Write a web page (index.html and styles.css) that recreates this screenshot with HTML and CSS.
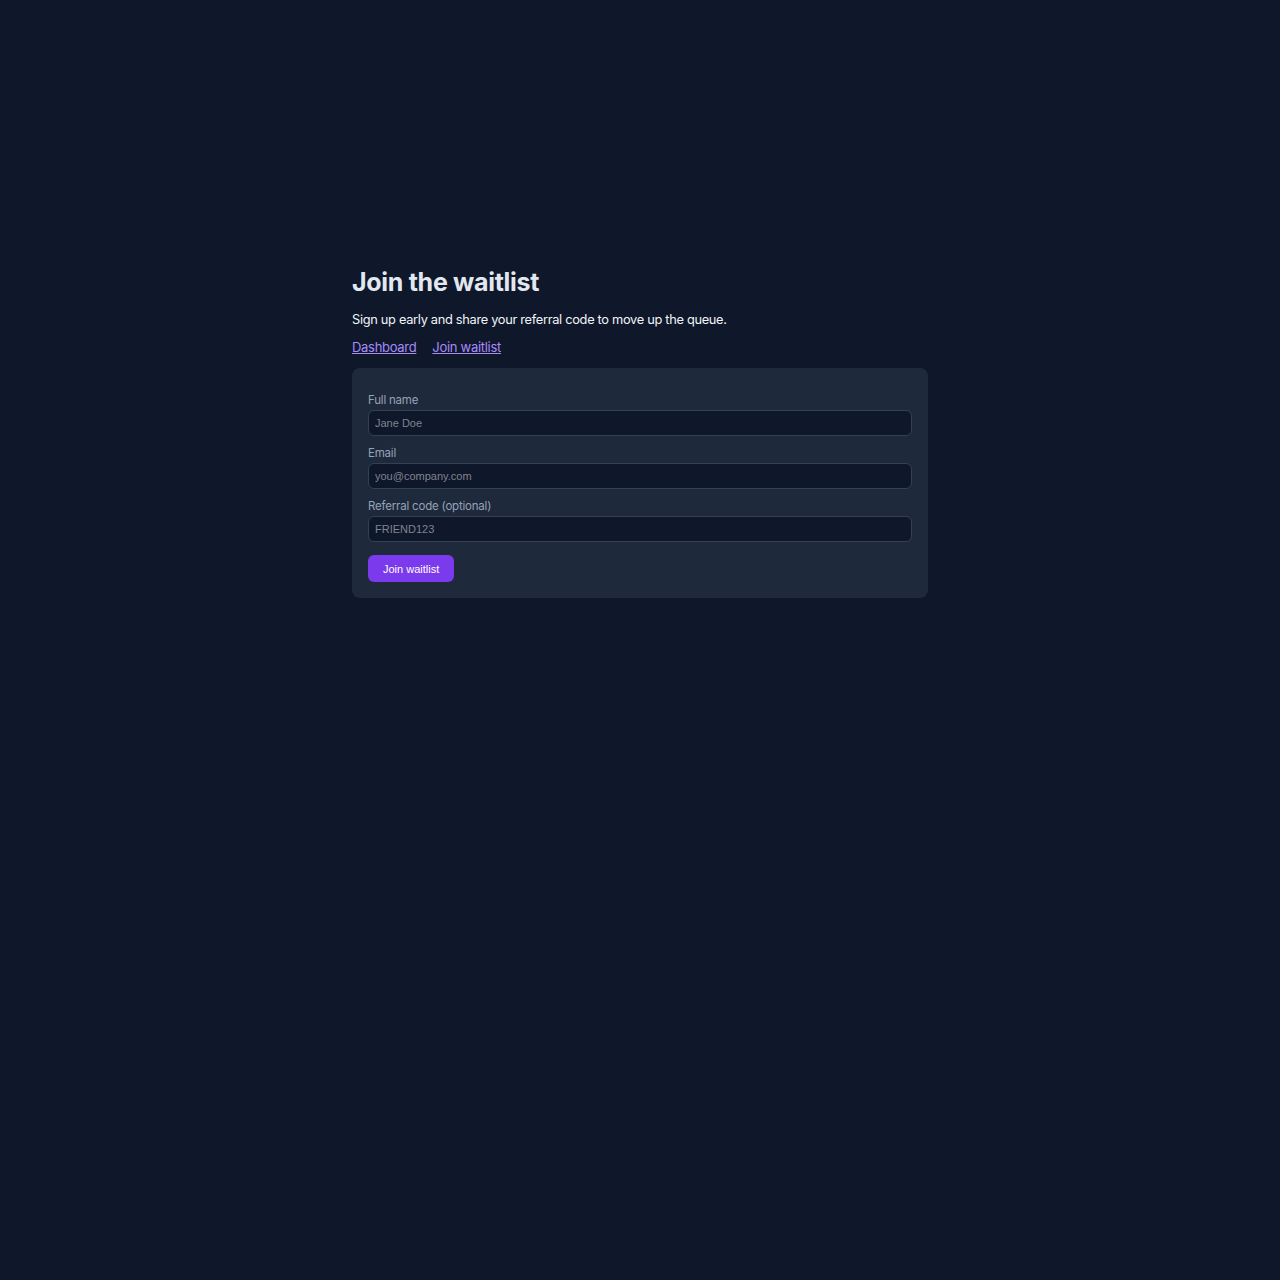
FILE: index.html
```html
<!DOCTYPE html>
<html lang="en">

<head>
    <meta charset="UTF-8">
    <meta name="viewport" content="width=device-width, initial-scale=1.0">
    <title>Join the waitlist</title>
    <link rel="stylesheet" href="styles.css">
</head>

<body>
    <main class="page">
        <h1 class="title">Join the waitlist</h1>
        <p class="lead">Sign up early and share your referral code to move up the queue.</p>
        <nav class="links">
            <a href="#">Dashboard</a>
            <a href="#">Join waitlist</a>
        </nav>

        <form class="card">
            <label class="field">
                <span class="label">Full name</span>
                <input type="text" placeholder="Jane Doe">
            </label>
            <label class="field">
                <span class="label">Email</span>
                <input type="email" placeholder="you@company.com">
            </label>
            <label class="field">
                <span class="label">Referral code (optional)</span>
                <input type="text" placeholder="FRIEND123">
            </label>
            <button type="button" class="btn">Join waitlist</button>
        </form>
    </main>
</body>

</html>
```

FILE: styles.css
```css
body {
    margin: 0;
    min-height: 100vh;
    background-color: #0f172a;
    color: #e2e8f0;
    font-family: Inter, "Noto Sans", sans-serif;
}

.page {
    max-width: 576px;
    margin: 0 auto;
    padding-top: 267px;
}

.title {
    margin: 0 0 13px;
    font-size: 25px;
    font-weight: 700;
    line-height: 30px;
    letter-spacing: -0.3px;
}

.lead {
    margin: 0 0 7px;
    font-size: 12.8px;
    line-height: 20px;
    letter-spacing: -0.3px;
    color: #f1f5f9;
}

.links {
    display: flex;
    gap: 16px;
    margin-bottom: 11px;
    font-size: 13px;
    line-height: 20px;
    letter-spacing: -0.3px;
}

.links a {
    color: #a78bfa;
}

.card {
    display: flex;
    flex-direction: column;
    align-items: flex-start;
    gap: 9px;
    padding: 24px 16px 16px;
    background-color: #1e293b;
    border-radius: 8px;
}

.field {
    display: flex;
    flex-direction: column;
    gap: 2px;
    width: 100%;
}

.label {
    font-size: 11.5px;
    line-height: 16px;
    letter-spacing: -0.2px;
    color: #94a3b8;
}

.field input {
    box-sizing: border-box;
    width: 100%;
    height: 26px;
    padding: 0 6px;
    background-color: #0f172a;
    border: 1px solid #334155;
    border-radius: 6px;
    color: #e2e8f0;
    font-family: "Liberation Sans", Arial, sans-serif;
    font-size: 11px;
}

.field input::placeholder {
    color: #7d8590;
}

.btn {
    margin-top: 4px;
    height: 27px;
    padding: 0 15px;
    background-color: #7c3aed;
    border: none;
    border-radius: 6px;
    color: #ffffff;
    font-family: "Liberation Sans", Arial, sans-serif;
    font-size: 11px;
}
```
